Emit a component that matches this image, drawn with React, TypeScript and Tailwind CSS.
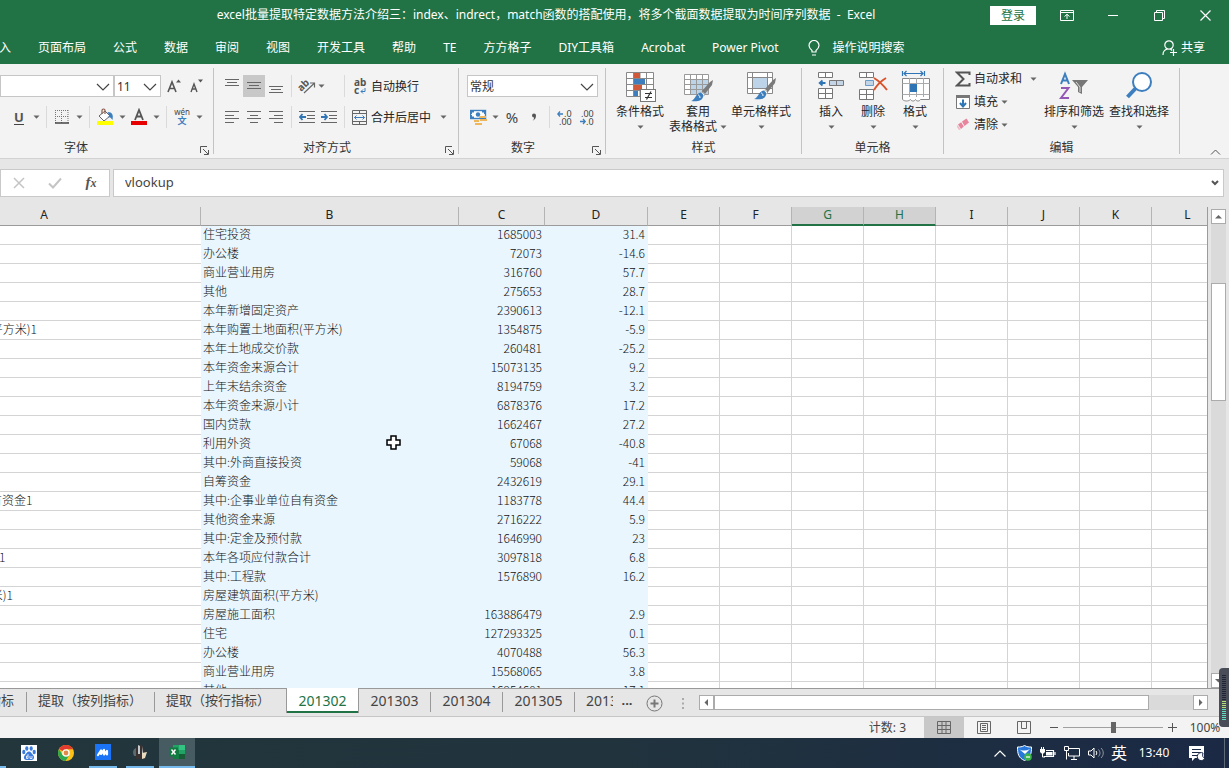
import type { ReactNode } from 'react'

const menuTabs = ['页面布局', '公式', '数据', '审阅', '视图', '开发工具', '帮助', 'TE', '方方格子', 'DIY工具箱', 'Acrobat', 'Power Pivot']

const rows = [
  { name: '住宅投资', value: '1685003', rate: '31.4' },
  { name: '办公楼', value: '72073', rate: '-14.6' },
  { name: '商业营业用房', value: '316760', rate: '57.7' },
  { name: '其他', value: '275653', rate: '28.7' },
  { name: '本年新增固定资产', value: '2390613', rate: '-12.1' },
  { key: '本年购置土地面积(平方米)1', name: '本年购置土地面积(平方米)', value: '1354875', rate: '-5.9' },
  { name: '本年土地成交价款', value: '260481', rate: '-25.2' },
  { name: '本年资金来源合计', value: '15073135', rate: '9.2' },
  { name: '上年末结余资金', value: '8194759', rate: '3.2' },
  { name: '本年资金来源小计', value: '6878376', rate: '17.2' },
  { name: '国内贷款', value: '1662467', rate: '27.2' },
  { name: '利用外资', value: '67068', rate: '-40.8' },
  { name: '其中:外商直接投资', value: '59068', rate: '-41' },
  { name: '自筹资金', value: '2432619', rate: '29.1' },
  { key: '其中:企事业单位自有资金1', name: '其中:企事业单位自有资金', value: '1183778', rate: '44.4' },
  { name: '其他资金来源', value: '2716222', rate: '5.9' },
  { name: '其中:定金及预付款', value: '1646990', rate: '23' },
  { key: '本年各项应付款合计1', name: '本年各项应付款合计', value: '3097818', rate: '6.8' },
  { name: '其中:工程款', value: '1576890', rate: '16.2' },
  { key: '房屋建筑面积(平方米)1', name: '房屋建筑面积(平方米)', value: '', rate: '' },
  { name: '房屋施工面积', value: '163886479', rate: '2.9' },
  { name: '住宅', value: '127293325', rate: '0.1' },
  { name: '办公楼', value: '4070488', rate: '56.3' },
  { name: '商业营业用房', value: '15568065', rate: '3.8' },
  { name: '其他', value: '16954601', rate: '17.1' },
]

const emptyColumns = ['E', 'F', 'G', 'H', 'I', 'J', 'K', 'L']

function Caret() {
  return (
    <svg className="w-[7px] h-1 shrink-0" viewBox="0 0 7 4">
      <path d="M0.5 0.5h6L3.5 3.7z" fill="#666" />
    </svg>
  )
}

function CaretButton({ label, className = 'w-3 justify-center' }: { label: string; className?: string }) {
  return (
    <button aria-label={label} className={`h-[22px] flex items-center shrink-0 ${className}`}>
      <Caret />
    </button>
  )
}

function IconButton({ label, active, children }: { label: string; active?: boolean; children: ReactNode }) {
  return (
    <button
      aria-label={label}
      className={`w-[22px] h-[22px] flex items-center justify-center shrink-0 ${active ? 'bg-[#c8c8c8]' : ''}`}
    >
      {children}
    </button>
  )
}

function Divider() {
  return <div className="w-px h-[22px] mx-1 bg-[#dadada] shrink-0" />
}

function Chevron() {
  return (
    <svg className="absolute right-1 top-2 w-[14px] h-2 pointer-events-none" viewBox="0 0 14 8">
      <path d="M1 1l6 6 6-6" fill="none" stroke="#444" strokeWidth="1.2" />
    </svg>
  )
}

function Combo({ label, value, className }: { label: string; value: string; className: string }) {
  return (
    <div className={`relative h-[22px] shrink-0 ${className}`}>
      <select aria-label={label} className="appearance-none w-full h-full bg-white border border-[#c6c6c6] pl-[2px] pt-px text-[#333] outline-none">
        <option>{value}</option>
      </select>
      <Chevron />
    </div>
  )
}

function Group({ label, launcher, width, labelClass = '', children }: {
  label: string
  launcher?: boolean
  width: string
  labelClass?: string
  children: ReactNode
}) {
  return (
    <>
      <div className={`flex flex-col shrink-0 ${width}`}>
        <div className="h-[74px]">{children}</div>
        <div className="h-5 flex">
          <div className={`flex-1 text-center leading-5 text-[#333] ${labelClass}`}>{label}</div>
          {launcher && (
            <button aria-label={`${label}设置`} className="w-[18px] flex items-center justify-center pt-1">
              <svg className="w-[9px] h-[9px]" viewBox="0 0 9 9" fill="none" stroke="#555">
                <path d="M0.5 7V0.5H7M3 3l5 5M8.5 4v4.5H4" />
              </svg>
            </button>
          )}
        </div>
      </div>
      <div className="w-px my-1 bg-[#c3c3c3] shrink-0" />
    </>
  )
}

function BigButton({ icon, lines, className }: { icon: ReactNode; lines: string[]; className: string }) {
  return (
    <button className={`flex flex-col items-center pt-1.5 leading-[15px] whitespace-nowrap ${className}`}>
      <span className="h-8 mb-0.5 flex items-start justify-center">{icon}</span>
      <span>{lines[0]}</span>
      <span className="h-[15px] flex items-center gap-[3px]">
        {lines[1]}
        <Caret />
      </span>
    </button>
  )
}

// horizontal lines of the alignment icons, [x1, x2, y]
function Lines({ lines }: { lines: number[][] }) {
  return (
    <svg className="w-[14px] h-[14px]" viewBox="0 0 14 14" stroke="#666">
      {lines.map(([a, b, y]) => (
        <path key={y} d={`M${a} ${y}.5H${b}`} />
      ))}
    </svg>
  )
}

function IndentIcon({ left }: { left?: boolean }) {
  return (
    <svg className="w-4 h-[14px]" viewBox="0 0 16 14" fill="none">
      <path d="M0 1.5h16M8 5.5h8M8 8.5h8M0 12.5h16" stroke="#666" />
      <path d={left ? 'M7 7H1M3.5 4L1 7l2.5 3' : 'M0 7h6M3.5 4L6 7l-2.5 3'} stroke="#2f75b5" strokeWidth="1.8" />
    </svg>
  )
}

function Brush() {
  return (
    <g>
      <path d="M31 7l-1 5-7 9-3-3 8-9z" fill="#7a7a7a" />
      <path d="M20 19l3 3-2 1-3-3z" fill="#fff" stroke="#888" strokeWidth="0.5" />
      <path d="M17 20c3-1 5 2 4 4-1 4-6 5-12 4 4-1 4-6 8-8z" fill="#3d7ebf" />
      <path d="M16 22c1 0 2 1 2 3" stroke="#fff" fill="none" />
    </g>
  )
}

function FontGroup() {
  return (
    <Group label="字体" launcher width="w-[213px]" labelClass="pr-[43px]">
      <div className="pt-[11px] flex flex-col gap-[9px]">
        <div className="flex">
          <Combo label="字体名称" value="" className="w-[114px]" />
          <Combo label="字号" value="11" className="w-[47px]" />
          <div className="flex pl-0.5">
            <IconButton label="增大字号">
              <svg className="w-4 h-4" viewBox="0 0 16 16">
                <path d="M2 14L6 4l4 10M3.5 10.500h5" fill="none" stroke="#555" strokeWidth="1.6" />
                <path d="M10 4.500h5L12.500 1.500z" fill="#555" />
              </svg>
            </IconButton>
            <IconButton label="减小字号">
              <svg className="w-4 h-4" viewBox="0 0 16 16">
                <path d="M3 14l3-8 3 8M4 11h4" fill="none" stroke="#555" strokeWidth="1.400" />
                <path d="M10 1.500h5L12.500 4.500z" fill="#555" />
              </svg>
            </IconButton>
          </div>
        </div>
        <div className="flex pl-2">
          <IconButton label="下划线">
            <span className="font-bold text-[13px] leading-[14px] border-b border-[#444] text-[#555]">U</span>
          </IconButton>
          <CaretButton label="下划线选项" />
          <Divider />
          <IconButton label="边框">
            <svg className="w-[14px] h-[14px]" viewBox="0 0 14 14" fill="none" stroke="#777">
              <path d="M0.500 0v13M6.500 0v13M13 0v13M0 0.500h14M0 6.500h14" strokeDasharray="1 1" />
              <path d="M0 13h14" stroke="#444" strokeWidth="1.500" />
            </svg>
          </IconButton>
          <CaretButton label="边框选项" />
          <Divider />
          <IconButton label="填充颜色">
            <svg className="w-[18px] h-[18px]" viewBox="0 0 18 18">
              <path d="M3 8l6-5 5 5-6 5z" fill="#fff" stroke="#666" />
              <path d="M6 6V2.500c0-2 3-2 3 0V6" fill="none" stroke="#8a5a4a" strokeWidth="1.200" />
              <path d="M11.500 4c5 0 6 3 5 8-1.500-2-2-3-5-3l2-1z" fill="#3d7ebf" />
              <rect x="1" y="13" width="16" height="4" fill="#ffff00" />
            </svg>
          </IconButton>
          <CaretButton label="填充颜色选项" />
          <IconButton label="字体颜色">
            <svg className="w-4 h-[18px]" viewBox="0 0 16 18">
              <path d="M4 12l4-10 4 10M5.500 8.500h5" fill="none" stroke="#555" strokeWidth="1.800" />
              <rect x="0" y="13" width="16" height="4" fill="#e60000" />
            </svg>
          </IconButton>
          <CaretButton label="字体颜色选项" />
          <Divider />
          <IconButton label="拼音">
            <span className="flex flex-col items-center">
              <span className="text-[8px] leading-2 text-[#444]">wén</span>
              <span className="text-[9px] leading-[10px] font-bold text-[#3d7ebf]">文</span>
            </span>
          </IconButton>
          <CaretButton label="拼音选项" />
        </div>
      </div>
    </Group>
  )
}

function AlignGroup() {
  return (
    <Group label="对齐方式" launcher width="w-[244px]">
      <div className="pt-[11px] pl-[7px] flex flex-col gap-[9px]">
        <div className="flex">
          <IconButton label="顶端对齐"><Lines lines={[[0, 14, 0], [2, 12, 3], [0, 14, 6]]} /></IconButton>
          <IconButton label="垂直居中" active><Lines lines={[[0, 14, 3], [2, 12, 6], [0, 14, 9]]} /></IconButton>
          <IconButton label="底端对齐"><Lines lines={[[0, 14, 7], [2, 12, 10], [0, 14, 13]]} /></IconButton>
          <Divider />
          <IconButton label="方向">
            <svg className="w-[18px] h-[18px]" viewBox="0 0 18 18">
              <text x="-1" y="11" transform="rotate(-45 6 8)" fontSize="10" fontWeight="bold" fill="#555">ab</text>
              <path d="M6 16l10-9.500M12 6h4.500V10.500" fill="none" stroke="#666" strokeWidth="1.200" />
            </svg>
          </IconButton>
          <CaretButton label="方向选项" className="w-[22px]" />
          <Divider />
          <button className="flex items-center gap-1 pl-1 pt-px">
            <svg className="w-[14px] h-[18px]" viewBox="0 0 14 18">
              <text x="1" y="8" fontSize="10" fontWeight="bold" fill="#555">ab</text>
              <text x="1" y="16" fontSize="10" fontWeight="bold" fill="#555">c</text>
              <path d="M12 10v3.500H8M10 11.500l-2 2 2 2" fill="none" stroke="#3d7ebf" />
            </svg>
            自动换行
          </button>
        </div>
        <div className="flex">
          <IconButton label="左对齐"><Lines lines={[[0, 14, 1], [0, 9, 5], [0, 14, 8], [0, 9, 12]]} /></IconButton>
          <IconButton label="居中"><Lines lines={[[0, 14, 1], [3, 11, 5], [0, 14, 8], [3, 11, 12]]} /></IconButton>
          <IconButton label="右对齐"><Lines lines={[[0, 14, 1], [5, 14, 5], [0, 14, 8], [5, 14, 12]]} /></IconButton>
          <Divider />
          <IconButton label="减少缩进量"><IndentIcon left /></IconButton>
          <IconButton label="增加缩进量"><IndentIcon /></IconButton>
          <Divider />
          <button className="flex items-center gap-1 pl-[3px] pt-px">
            <svg className="w-[15px] h-[15px]" viewBox="0 0 15 15" fill="none">
              <path d="M0.500 0.500h14v14h-14zM0.500 3.500h14M0.500 11.500h14M7.500 0v3.500M7.500 11.500V15" stroke="#666" />
              <path d="M2.500 7.500h10M4.500 5.500l-2 2 2 2M10.500 5.500l2 2-2 2" stroke="#3d7ebf" />
            </svg>
            合并后居中
          </button>
          <CaretButton label="合并选项" className="w-6 justify-center" />
        </div>
      </div>
    </Group>
  )
}

function NumberGroup() {
  return (
    <Group label="数字" launcher width="w-[146px]">
      <div className="pt-[11px] pl-2 flex flex-col gap-[9px]">
        <Combo label="数字格式" value="常规" className="w-[131px]" />
        <div className="flex">
          <IconButton label="会计数字格式">
            <svg className="w-[17px] h-[17px]" viewBox="0 0 17 17">
              <rect x="0.500" y="1.500" width="15" height="8" fill="#fff" stroke="#3d7ebf" strokeWidth="1.400" />
              <path d="M0 1h4v2.500H2V5H0zM0 10h4V7.500H2V6H0zM16 1h-4v2.500h2V5h2z" fill="#3d7ebf" />
              <circle cx="8" cy="5.500" r="2.200" fill="#3d7ebf" />
              <path d="M9 7h7v2H9zM10 10h7v2h-7zM4 11h5v2H4zM5 14h7v2H5z" fill="#efb75c" />
            </svg>
          </IconButton>
          <CaretButton label="会计数字格式选项" />
          <IconButton label="百分比样式"><span className="text-[15px] text-[#444]">%</span></IconButton>
          <IconButton label="千位分隔样式">
            <svg className="w-2 h-2" viewBox="0 0 8 8">
              <path d="M2 2.500a2 2 0 1 1 4 0C6 5 5 6.500 2.500 8 4 6.500 4 5.500 4 4.500a2 2 0 0 1-2-2z" fill="#555" />
            </svg>
          </IconButton>
          <Divider />
          <IconButton label="增加小数位数">
            <svg className="w-4 h-[15px]" viewBox="0 0 16 15">
              <path d="M6 4H1M3 1.500L0.800 4 3 6.500" fill="none" stroke="#3d7ebf" strokeWidth="1.300" />
              <text x="7" y="7" fontSize="9" fill="#444">.0</text>
              <text x="2" y="15" fontSize="9" fill="#444">.00</text>
            </svg>
          </IconButton>
          <IconButton label="减少小数位数">
            <svg className="w-4 h-[15px]" viewBox="0 0 16 15">
              <path d="M1 11.500h5M4 9l2.200 2.500L4 14" fill="none" stroke="#3d7ebf" strokeWidth="1.300" />
              <text x="2" y="7" fontSize="9" fill="#444">.00</text>
              <text x="7" y="15" fontSize="9" fill="#444">.0</text>
            </svg>
          </IconButton>
        </div>
      </div>
    </Group>
  )
}

function StyleGroup() {
  return (
    <Group label="样式" width="w-[195px]">
      <div className="flex pl-[5px]">
        <BigButton
          className="w-[58px]"
          lines={['条件格式']}
          icon={
            <svg className="w-[31px] h-8" viewBox="0 0 31 32">
              <path d="M1.500 2.500h27v24h-27zM1.500 8.500h27M1.500 14.500h27M1.500 20.500h27M8.500 2v24M15 2v24M21.500 2v24" fill="#fff" stroke="#888" />
              <path d="M9 3h6v5H9zM9 15h8v5H9z" fill="#d0583b" />
              <path d="M9 9h11v5H9zM9 21h4v5H9z" fill="#3d7ebf" />
              <rect x="15.500" y="19.500" width="15" height="12" fill="#fff" stroke="#777" />
              <path d="M20 23.500h7M20 27.500h7M26 21.500l-4.500 8" stroke="#333" strokeWidth="1.200" />
            </svg>
          }
        />
        <BigButton
          className="w-[58px]"
          lines={['套用', '表格格式']}
          icon={
            <svg className="w-8 h-8" viewBox="0 1 32 32">
              <path d="M2.500 5.500h24v20h-24z" fill="#fff" />
              <path d="M8.500 10.500h18v15h-18z" fill="#bdd3e8" />
              <path d="M2.500 5.500h24v20h-24zM2.500 10.500h24M2.500 15.500h24M2.500 20.500h24M8.500 5v20M14.500 5v20M20.500 5v20" fill="none" stroke="#999" />
              <g transform="translate(0 4)"><Brush /></g>
            </svg>
          }
        />
        <BigButton
          className="w-[68px]"
          lines={['单元格样式']}
          icon={
            <svg className="w-8 h-8" viewBox="0 0 32 32">
              <path d="M2.500 2.500h25v21h-25zM2.500 7.500h25M2.500 18.500h25M7.500 2v21M22.500 2v21" fill="#fff" stroke="#888" />
              <path d="M8 8h14v10H8z" fill="#bdd3e8" />
              <g transform="translate(0 1)"><Brush /></g>
            </svg>
          }
        />
      </div>
    </Group>
  )
}

function CellGroup() {
  return (
    <Group label="单元格" width="w-[141px]">
      <div className="flex pl-2">
        <BigButton
          className="w-[42px]"
          lines={['插入']}
          icon={
            <svg className="w-[27px] h-8" viewBox="0 0 27 32">
              <path d="M0.500 2.500h14v5h-14zM7.500 2.500v5M0.500 18.500h14v10h-14zM0.500 23.500h14M7.500 18.500v10" fill="#fff" stroke="#777" />
              <path d="M11.500 10.500h14v5h-14zM18.500 10.500v5" fill="#c3d5e6" stroke="#777" />
              <path d="M7.500 13H2M4.500 10.500L1.700 13l2.800 2.500" fill="none" stroke="#2f75b5" strokeWidth="1.800" />
            </svg>
          }
        />
        <BigButton
          className="w-[42px]"
          lines={['删除']}
          icon={
            <svg className="w-[30px] h-8" viewBox="0 0 30 32">
              <path d="M1.500 2.500h14v5h-14zM8.500 2.500v5M1.500 19.500h14v10h-14zM1.500 24.500h14M8.500 19.500v10" fill="#fff" stroke="#777" />
              <path d="M7.500 10.500h8v5h-8z" fill="#c3d5e6" stroke="#6a9cc9" />
              <path d="M16 8c5 3 9 7 13 12M28 8c-5 3-9 7-12 12" fill="none" stroke="#d9532c" strokeWidth="2" />
            </svg>
          }
        />
        <BigButton
          className="w-[42px]"
          lines={['格式']}
          icon={
            <svg className="w-[29px] h-8" viewBox="0 0 29 32">
              <path d="M1.500 1v5M23.500 1v5M3 3.500h19M5.500 1L3 3.500 5.500 6M19.500 1L22 3.500 19.500 6" fill="none" stroke="#2f75b5" strokeWidth="1.200" />
              <path d="M1.500 8.500h27v21h-9c-1 2-4 2-5 0-1 2-4 2-5 0-2 2-6 2-8 0z" fill="#fff" stroke="#888" />
              <path d="M1.500 13.500h27M1.500 24.500h27M8.500 8v19M15.500 8v19M22.500 8v19" stroke="#aaa" />
              <path d="M9 14h7v8H9z" fill="#2f75b5" />
            </svg>
          }
        />
      </div>
    </Group>
  )
}

function EditGroup() {
  return (
    <Group label="编辑" width="w-[235px]">
      <div className="flex">
        <div className="flex flex-col w-[98px] pl-[11px] pt-[3px]">
          <button className="h-[23px] flex items-center gap-[3px]">
            <svg className="w-4 h-4" viewBox="0 0 16 16">
              <path d="M14.500 4V1.500H2L8.500 8 2 14.500h12.500V12" fill="none" stroke="#555" strokeWidth="2" />
            </svg>
            自动求和
            <span className="pl-[5px]"><Caret /></span>
          </button>
          <button className="h-[23px] flex items-center gap-[3px]">
            <svg className="w-4 h-4" viewBox="0 0 16 16">
              <path d="M1.500 1.500h13v13h-13z" fill="#fff" stroke="#777" />
              <path d="M1 1h14v3H1z" fill="#777" />
              <path d="M8 5.500V12M5 9l3 3.500L11 9" fill="none" stroke="#2f75b5" strokeWidth="2" />
            </svg>
            填充
            <Caret />
          </button>
          <button className="h-[23px] flex items-center gap-[3px]">
            <svg className="w-4 h-4" viewBox="0 0 16 16">
              <path d="M7 4.500L11.500 1.500 14 5.500 9.500 9z" fill="#e8849c" />
              <path d="M6.200 5.200L8.800 9.500 6 12 3 7.500z" fill="#e8849c" />
              <path d="M2.500 8l3 4.500-1.500.500-2-3z" fill="#f4b8c5" />
            </svg>
            清除
            <Caret />
          </button>
        </div>
        <BigButton
          className="w-[64px]"
          lines={['排序和筛选']}
          icon={
            <svg className="w-[30px] h-8" viewBox="0 0 30 32">
              <path d="M2 14L6 4l4 10M3.500 10.500h5" fill="none" stroke="#3d7ebf" strokeWidth="2" />
              <path d="M2 18h7.500L2 28h8" fill="none" stroke="#9557b5" strokeWidth="2" />
              <path d="M13 10h16l-6 7v7l-4-2v-5z" fill="#777" />
              <path d="M17 12l4 5v5" fill="none" stroke="#ddd" />
            </svg>
          }
        />
        <BigButton
          className="w-[66px]"
          lines={['查找和选择']}
          icon={
            <svg className="w-[30px] h-8" viewBox="0 0 30 32">
              <circle cx="18" cy="12" r="9" fill="#fff" stroke="#3d7ebf" strokeWidth="2" />
              <path d="M11.500 18.500L3.500 27" stroke="#3d7ebf" strokeWidth="4" />
            </svg>
          }
        />
      </div>
    </Group>
  )
}

function TitleBar() {
  return (
    <div className="h-[30px] flex items-center text-white">
      <h1 className="flex-1 pl-[102px] text-center whitespace-pre">
        excel批量提取特定数据方法介绍三：index、indrect，match函数的搭配使用，将多个截面数据提取为时间序列数据  -  Excel
      </h1>
      <button className="w-[46px] h-[19px] bg-white text-[#217346] leading-[19px]">登录</button>
      <div className="flex pl-2">
        <button aria-label="功能区显示选项" className="w-[46px] h-[30px] flex items-center justify-center">
          <svg className="w-[14px] h-3" viewBox="0 0 14 12" fill="none" stroke="#fff">
            <path d="M0.500 1.500h13v10H0.500zM0.500 3.500h13M7 10V5.500M4.500 7.500L7 5.300l2.500 2.200" />
          </svg>
        </button>
        <button aria-label="最小化" className="w-[46px] h-[30px] flex items-center justify-center">
          <span className="w-[10px] h-px bg-white" />
        </button>
        <button aria-label="还原" className="w-[46px] h-[30px] flex items-center justify-center">
          <svg className="w-[11px] h-[11px]" viewBox="0 0 11 11" fill="none" stroke="#fff">
            <path d="M0.500 2.500h8v8h-8zM2.500 2.500v-2h8v8h-2" />
          </svg>
        </button>
        <button aria-label="关闭" className="w-[46px] h-[30px] mr-px flex items-center justify-center">
          <svg className="w-[11px] h-[11px]" viewBox="0 0 11 11" fill="none" stroke="#fff">
            <path d="M0.500 0.500l10 10M10.500 0.500l-10 10" strokeWidth="1.200" />
          </svg>
        </button>
      </div>
    </div>
  )
}

function MenuBar() {
  return (
    <div className="h-[34px] pt-0.5 flex items-center text-white whitespace-nowrap">
      <nav className="flex gap-[27px]">
        <button className="-ml-px">入</button>
        {menuTabs.map(tab => (
          <button key={tab}>{tab}</button>
        ))}
      </nav>
      <button className="flex items-center gap-[13px] pl-[29px]">
        <svg className="w-3 h-4" viewBox="0 0 12 16" fill="none" stroke="#fff" strokeWidth="1.200">
          <path d="M4 12V10.500C1.500 8.500 1 7 1 5.500a5 5 0 0 1 10 0C11 7 10.500 8.500 8 10.500V12zM4 15h4" />
        </svg>
        操作说明搜索
      </button>
      <button className="ml-auto pr-6 flex items-center gap-1">
        <svg className="w-[15px] h-4" viewBox="0 0 15 16" fill="none" stroke="#fff" strokeWidth="1.200">
          <circle cx="7" cy="5" r="4.200" />
          <path d="M1 15c0-3 2-5.500 4.500-6M8.500 9l1.500 1.500M8 12.500h7M11.500 9v7" />
        </svg>
        共享
      </button>
    </div>
  )
}

function FormulaBar() {
  return (
    <div className="flex gap-[3px] pt-[10px] pb-[10px] pr-[5px]">
      <div className="w-[110px] h-7 bg-white border border-[#c9c9c9] flex items-center shrink-0">
        <button aria-label="取消" className="w-9 flex justify-center">
          <svg className="w-3 h-3" viewBox="0 0 12 12"><path d="M1 1l10 10M11 1L1 11" stroke="#c4c4c4" strokeWidth="1.500" /></svg>
        </button>
        <button aria-label="输入" className="w-9 flex justify-center">
          <svg className="w-[14px] h-3" viewBox="0 0 14 12"><path d="M1 6.500L5 10.500 13 1.500" fill="none" stroke="#c4c4c4" strokeWidth="2" /></svg>
        </button>
        <button aria-label="插入函数" className="w-9 text-[#555] italic font-bold font-['Liberation_Serif',serif]">
          <span className="text-[15px]">f</span>x
        </button>
      </div>
      <div className="flex-1 h-7 bg-white border border-[#c9c9c9] flex items-center pr-1">
        <input aria-label="编辑栏" defaultValue="vlookup" className="flex-1 h-full pl-[11px] pb-0.5 text-[13px] text-[#444] outline-none" />
        <button aria-label="展开编辑栏">
          <svg className="w-2 h-[6px]" viewBox="0 0 8 6"><path d="M1 1l3 3 3-3" fill="none" stroke="#555" strokeWidth="2" /></svg>
        </button>
      </div>
    </div>
  )
}

function Grid() {
  return (
    <div className="flex-1 min-w-0 overflow-hidden bg-white border-r border-[#9b9b9b]">
      {/* scrolled sideways, so column A starts left of the window */}
      <table className="table-fixed w-[1336px] -ml-[112px] border-separate border-spacing-0 text-[#111]">
        <colgroup>
          <col className="w-[313px]" />
          <col className="w-[258px]" />
          <col className="w-[86px]" />
          <col className="w-[103px]" />
          {emptyColumns.map(c => <col key={c} className="w-[72px]" />)}
        </colgroup>
        <thead>
          <tr className="bg-[#e6e6e6] text-[#222]">
            {['A', 'B', 'C', 'D', ...emptyColumns].map(c => (
              <th
                key={c}
                className={
                  c === 'G' || c === 'H'
                    ? 'h-[19px] p-0 align-top font-normal leading-[16px] bg-[#d2d2d2] text-[#217346] border-r border-r-[#b4b4b4] border-b-2 border-b-[#217346]'
                    : 'h-[19px] p-0 align-top font-normal leading-[16px] border-r border-r-[#b4b4b4] border-b border-b-[#9b9b9b]'
                }
              >
                {c}
              </th>
            ))}
          </tr>
        </thead>
        <tbody className="font-light font-['Noto_Sans_CJK_SC',sans-serif]">
          {rows.map((row, i) => (
            <tr key={i} className="leading-[16px] align-top whitespace-nowrap">
              <td className="h-[19px] p-0 pl-[3px] border-b border-[#d4d4d4]">{row.key}</td>
              <td className="p-0 pl-[2px] bg-[#e9f6fe]">{row.name}</td>
              <td className="p-0 pr-[3px] bg-[#e9f6fe] text-right">{row.value}</td>
              <td className="p-0 pr-[3px] bg-[#e9f6fe] text-right">{row.rate}</td>
              {emptyColumns.map(c => <td key={c} className="p-0 border-r border-b border-[#d4d4d4]" />)}
            </tr>
          ))}
        </tbody>
      </table>
    </div>
  )
}

function Arrow({ d }: { d: string }) {
  return (
    <svg className="w-[7px] h-[7px]" viewBox="0 0 7 7"><path d={d} fill="#666" /></svg>
  )
}

function VerticalScroll() {
  return (
    <div className="w-[21px] pl-[3px] pt-0.5 shrink-0 flex flex-col">
      <button aria-label="向上滚动" className="w-[15px] h-[15px] bg-white border border-[#ababab] flex items-center justify-center shrink-0">
        <Arrow d="M0 5.500h7L3.500 2z" />
      </button>
      <div className="flex-1 w-[15px] bg-[#dadada] pt-[59px]">
        <div className="h-[118px] bg-white border border-[#ababab]" />
      </div>
      <button aria-label="向下滚动" className="w-[15px] h-[15px] bg-white border border-[#ababab] flex items-center justify-center shrink-0">
        <Arrow d="M0 2h7L3.500 5.500z" />
      </button>
    </div>
  )
}

function SheetTabs() {
  return (
    <div className="h-[29px] shrink-0 flex bg-[#e6e6e6] border-t border-[#999] text-[13px] text-[#444] whitespace-nowrap">
      <div className="flex items-start leading-[22px]">
        <button className="w-[26px] h-6 overflow-hidden flex justify-end pr-3">指标</button>
        <span className="w-px h-5 mt-[3px] bg-[#999]" />
        <button className="w-[127px] text-left pl-[11px]">提取（按列指标）</button>
        <span className="w-px h-5 mt-[3px] bg-[#999]" />
        <button className="w-[131px] text-left pl-[11px]">提取（按行指标）</button>
        <button className="w-[73px] h-[25px] -mt-px bg-white border-x border-[#999] shadow-[inset_0_-2px_0_#217346] text-[14px] text-[#217346]">201302</button>
        {['201303', '201304', '201305'].map(sheet => (
          <div key={sheet} className="flex">
            <button className="w-[71px] text-[14px]">{sheet}</button>
            <span className="w-px h-5 mt-[3px] bg-[#999]" />
          </div>
        ))}
        <button className="w-[38px] h-6 overflow-hidden text-left pl-[11px] text-[14px]">201306</button>
        <button aria-label="更多工作表" className="w-[28px] font-bold">...</button>
      </div>
      <button aria-label="新工作表" className="w-[26px] flex items-center justify-center">
        <svg className="w-[17px] h-[17px]" viewBox="0 0 17 17" fill="none" stroke="#777">
          <circle cx="8.500" cy="8.500" r="7.500" />
          <path d="M8.500 4.500v8M4.500 8.500h8" strokeWidth="2" />
        </svg>
      </button>
      <div className="w-8 flex items-center justify-center">
        <svg className="w-[2px] h-[11px]" viewBox="0 0 2 11" fill="#aaa">
          <path d="M0 0h2v2H0zM0 4.500h2v2H0zM0 9h2v2H0z" />
        </svg>
      </div>
      <div className="flex-1 h-[15px] mt-1.5 mr-[21px] flex bg-[#dadada]">
        <button aria-label="向左滚动" className="w-[15px] bg-white border border-[#ababab] flex items-center justify-center">
          <Arrow d="M5 0v7L1.500 3.500z" />
        </button>
        <div className="flex-1 bg-white border border-[#ababab]" />
        <div className="w-11" />
        <button aria-label="向右滚动" className="w-[15px] bg-white border border-[#ababab] flex items-center justify-center">
          <Arrow d="M2 0v7l3.500-3.500z" />
        </button>
      </div>
    </div>
  )
}

function StatusBar() {
  return (
    <div className="h-[21px] shrink-0 bg-[#f3f3f3] shadow-[0_-1px_0_#c6c6c6] flex items-center justify-end text-[#444]">
      <span className="pr-[18px]">计数: 3</span>
      <button aria-label="普通" className="w-10 h-full bg-[#c8c8c8] flex items-center justify-center">
        <svg className="w-[14px] h-[13px]" viewBox="0 0 14 13" fill="none" stroke="#666">
          <path d="M0.500 0.500h13v12h-13zM0.500 4.500h13M0.500 8.500h13M5 0v13M9 0v13" />
        </svg>
      </button>
      <button aria-label="页面布局视图" className="w-10 h-full flex items-center justify-center">
        <svg className="w-[14px] h-[13px]" viewBox="0 0 14 13" fill="none" stroke="#666">
          <path d="M0.500 0.500h13v12h-13zM3.500 2.500h7v8h-7zM5 4.500h4M5 6.500h4M5 8.500h4" />
        </svg>
      </button>
      <button aria-label="分页预览" className="w-10 h-full flex items-center justify-center">
        <svg className="w-[14px] h-[13px]" viewBox="0 0 14 13" fill="none" stroke="#666">
          <path d="M0.500 0.500h13v12h-13zM4.500 0.500v7h5v-7" />
        </svg>
      </button>
      <button aria-label="缩小" className="w-[19px] h-full flex items-center justify-center">
        <span className="w-2 h-px bg-[#555]" />
      </button>
      <input
        type="range"
        aria-label="显示比例"
        className="appearance-none w-[100px] h-px bg-[#a0a0a0] [&::-webkit-slider-thumb]:appearance-none [&::-webkit-slider-thumb]:w-[5px] [&::-webkit-slider-thumb]:h-[11px] [&::-webkit-slider-thumb]:bg-[#666]"
      />
      <button aria-label="放大" className="w-[18px] h-full flex items-center justify-center">
        <svg className="w-[9px] h-[9px]" viewBox="0 0 9 9" stroke="#555"><path d="M0 4.500h9M4.500 0v9" /></svg>
      </button>
      <button className="w-[48px] text-center">100%</button>
    </div>
  )
}

function TaskButton({ label, className = '', children }: { label: string; className?: string; children: ReactNode }) {
  return (
    <button aria-label={label} className={`h-full flex items-center justify-center ${className}`}>
      {children}
    </button>
  )
}

function TaskBar() {
  return (
    <div className="h-[30px] shrink-0 flex items-center bg-linear-to-r from-[#22363c] via-[#21333d] to-[#1b2945] text-white">
      <div className="w-[6px] h-full border-b-2 border-[#76b9ed]" />
      <TaskButton label="百度" className="w-[46px]">
        <svg className="w-4 h-4" viewBox="0 0 16 16">
          <rect width="16" height="16" fill="#fff" />
          <g fill="#3a7bdc">
            <ellipse cx="2.800" cy="7" rx="1.600" ry="2.200" />
            <ellipse cx="5.800" cy="3.500" rx="1.600" ry="2.300" />
            <ellipse cx="10.200" cy="3.500" rx="1.600" ry="2.300" />
            <ellipse cx="13.200" cy="7" rx="1.600" ry="2.200" />
            <path d="M8 6.500c2 0 2.500 2 4 3.500 2 2 1 5-1.500 5h-5C3 15 2 12 4 10c1.500-1.500 2-3.500 4-3.500z" />
          </g>
          <path d="M7 9v4.500H5.500V11H7M9 11v2.500h2V11" fill="none" stroke="#fff" strokeWidth="0.800" />
        </svg>
      </TaskButton>
      <TaskButton label="Chrome" className="w-7">
        <svg className="w-4 h-4" viewBox="0 0 16 16">
          <circle cx="8" cy="8" r="8" fill="#fbc116" />
          <path d="M8 8L1.100 4A8 8 0 0 1 15 4.200H8z" fill="#e33b2e" />
          <path d="M1.100 4A8 8 0 0 0 7.500 16L11 10.500 4.500 10z" fill="#2da94f" />
          <circle cx="8" cy="8" r="3.800" fill="#fff" />
          <circle cx="8" cy="8" r="2.400" fill="#e0894a" />
        </svg>
      </TaskButton>
      <TaskButton label="迅捷" className="w-7 ml-[9px] border-b-2 border-[#76b9ed]">
        <svg className="w-4 h-4" viewBox="0 0 16 16">
          <rect width="16" height="16" fill="#1a74f5" />
          <path d="M3 11l3-4.500V10l3-4v4.500L12 7v3.500" fill="none" stroke="#fff" strokeWidth="2.200" strokeLinecap="round" strokeLinejoin="round" />
        </svg>
      </TaskButton>
      <TaskButton label="播放器" className="w-7 ml-[9px] border-b-2 border-[#76b9ed]">
        <svg className="w-4 h-4" viewBox="0 0 16 16">
          <path d="M4 4c1-3 3-4 6-3l3 6 1 8H4z" fill="#3a3230" />
          <path d="M1 9c0-3 1-4 3-5v8H2z" fill="#5c6a70" />
          <path d="M6 1l2 1v8H6zM10 2l1 7h-1z" fill="#c4cdd1" />
          <path d="M10 9l5-1-2 6-3 1z" fill="#e8dcc0" />
        </svg>
      </TaskButton>
      <TaskButton label="Excel" className="w-9 ml-[5px] bg-[#475b63] border-b-2 border-[#76b9ed]">
        <svg className="w-4 h-4" viewBox="0 0 16 16">
          <path d="M4 1h12v14H4z" fill="#21a366" />
          <path d="M10 1h6v5h-6z" fill="#33c481" />
          <path d="M4 6h6v9H4z" fill="#107c41" />
          <path d="M10 10h6v5h-6z" fill="#185c37" />
          <rect y="3.500" width="9" height="9" fill="#107c41" />
          <path d="M2.500 5.500l4 5M6.500 5.500l-4 5" stroke="#fff" strokeWidth="1.400" />
        </svg>
      </TaskButton>
      <div className="ml-auto h-full flex items-center">
        <TaskButton label="显示隐藏的图标" className="w-6">
          <svg className="w-3 h-[7px]" viewBox="0 0 12 7"><path d="M0.500 6.500L6 1l5.500 5.500" fill="none" stroke="#fff" strokeWidth="1.200" /></svg>
        </TaskButton>
        <TaskButton label="安全中心" className="w-6">
          <svg className="w-[15px] h-4" viewBox="0 0 15 16">
            <path d="M7.500 0.500C10 2 12 2 14.500 2c0 7-1 11-7 13.500C1.500 13 0.500 9 0.500 2 3 2 5 2 7.500 0.500z" fill="#2878dc" stroke="#fff" />
            <path d="M2 4c3 2 7 2 11 0L8 9z" fill="#fff" />
            <circle cx="11" cy="12" r="3.800" fill="#3bb54a" />
            <path d="M9 12h4" stroke="#fff" strokeWidth="1.200" />
          </svg>
        </TaskButton>
        <TaskButton label="电池" className="w-6">
          <svg className="w-4 h-3" viewBox="0 0 16 12">
            <path d="M6 3.500h7.500v6H4M15 5v3" fill="none" stroke="#fff" strokeWidth="1.200" />
            <path d="M6 5h6.500v3.500H6zM0 2h5v3L3.500 6.500h-2L0 5z" fill="#fff" />
            <path d="M1.500 0v2M3.500 0v2M2.500 6v4H5" fill="none" stroke="#fff" />
          </svg>
        </TaskButton>
        <TaskButton label="网络" className="w-6">
          <svg className="w-4 h-[14px]" viewBox="0 0 16 14" fill="none" stroke="#fff">
            <path d="M5 2.500h10.500v7.500H4.500V7M10 10v3M7 13.500h6M0.500 0.500h4v4h-4zM2.500 4.500v9" />
          </svg>
        </TaskButton>
        <TaskButton label="音量" className="w-6">
          <svg className="w-4 h-3" viewBox="0 0 16 12" fill="none" stroke="#fff">
            <path d="M0.500 4h2.500L6 1v10L3 8H0.500zM8 4c1 1.500 1 2.500 0 4" />
            <path d="M10.500 2.500c2 2.500 2 4.500 0 7M13 1c3 3 3 7 0 10" opacity="0.500" />
          </svg>
        </TaskButton>
        <button className="w-[22px] text-base leading-none">英</button>
        <time className="w-[48px] text-center">13:40</time>
        <TaskButton label="通知" className="w-[38px]">
          <svg className="w-[18px] h-4" viewBox="0 0 18 16">
            <path d="M1 1h15v12H7l-3 3v-3H1z" fill="#fff" />
            <path d="M4 4.500h9M4 7.500h9M4 10.500h5" stroke="#1b2945" />
            <path d="M15 8a4 4 0 1 0 2 5c-2 0-3-2-2-5z" fill="#fff" stroke="#1b2945" />
          </svg>
        </TaskButton>
        <div className="w-px h-full ml-2 mr-1 bg-[#5d6a78]" />
      </div>
    </div>
  )
}

export default function App() {
  return (
    <div className="relative h-screen overflow-hidden flex flex-col bg-[#e6e6e6] text-xs text-[#262626] font-['Noto_Sans','Noto_Sans_CJK_SC',sans-serif]">
      <header className="bg-[#217346] shrink-0">
        <TitleBar />
        <MenuBar />
      </header>
      <div className="h-[95px] shrink-0 bg-[#f3f3f3] border-b border-[#d2d2d2] flex">
        <FontGroup />
        <AlignGroup />
        <NumberGroup />
        <StyleGroup />
        <CellGroup />
        <EditGroup />
        <div className="flex-1 flex items-end justify-end pr-2 pb-[3px]">
          <button aria-label="折叠功能区">
            <svg className="w-[11px] h-[6px]" viewBox="0 0 11 6"><path d="M1 5.500L5.500 1 10 5.500" fill="none" stroke="#555" /></svg>
          </button>
        </div>
      </div>
      <FormulaBar />
      <main className="flex-1 min-h-0 flex">
        <Grid />
        <VerticalScroll />
      </main>
      <SheetTabs />
      <StatusBar />
      <TaskBar />

      {/* mouse pointer */}
      <svg className="absolute left-[386px] top-[435px] w-[15px] h-[15px]" viewBox="0 0 15 15">
        <path d="M5 1h5v4h4v5h-4v4H5v-4H1V5h4z" fill="#fff" stroke="#000" strokeWidth="1.500" />
      </svg>

      {/* sound level meter over the window edge */}
      <div className="absolute right-0 top-[668px] w-[10px] h-[59px] rounded-l bg-[#484d58] flex justify-center pt-[7px]">
        <svg className="w-1 h-[45px]" viewBox="0 0 4 45">
          {Array.from({ length: 23 }, (_, i) => (
            <rect key={i} y={i * 2} width="4" height="1" fill={i < 13 ? '#1f2436' : i < 17 ? '#b4e07a' : '#5fe0c0'} />
          ))}
        </svg>
      </div>
    </div>
  )
}
